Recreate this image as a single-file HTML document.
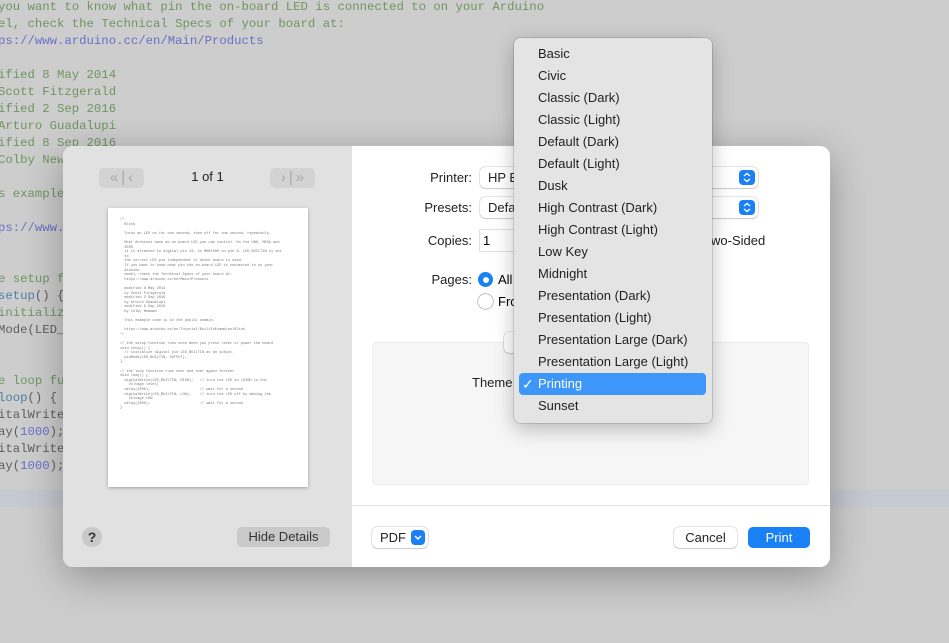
<!DOCTYPE html>
<html><head><meta charset="utf-8"><style>
*{margin:0;padding:0;box-sizing:border-box}
body{width:949px;height:643px;overflow:hidden;background:#cdcdcd;position:relative;font-family:"Liberation Sans",sans-serif}
.code{position:absolute;left:-2px;top:-1px;font:12.3px/17px "Liberation Mono",monospace;color:#5e5e5e;white-space:pre}
.g{color:#6f9660}.b{color:#6a6fc8}.t{color:#4d82a8}
.hl{position:absolute;left:0;top:490px;width:949px;height:17px;background:#c5c9d0}
.dlg{position:absolute;left:63px;top:146px;width:767px;height:421px;border-radius:10px;overflow:hidden;background:#fff;box-shadow:0 10px 40px rgba(0,0,0,.3)}
.lp{position:absolute;left:0;top:0;width:289px;height:421px;background:#e1e1e1}
.a{position:absolute}
.nav{position:absolute;top:22px;height:20px;width:45px;background:#d3d3d3;border-radius:5px;color:#a8a8a8;font-size:15px;text-align:center;line-height:19px}
.page{position:absolute;left:45px;top:62px;width:200px;height:279px;background:#fff;box-shadow:0 1px 3px rgba(0,0,0,.3);font:3.6px/4.6px "Liberation Mono",monospace;color:#777;white-space:pre;padding:10px 0 0 12px;overflow:hidden}
.lbl{position:absolute;font-size:13px;color:#222;text-align:right;width:100px}
.pop{position:absolute;height:21px;background:#fff;border-radius:5px;box-shadow:0 0 0 .5px rgba(0,0,0,.2),0 1px 1px rgba(0,0,0,.12);font-size:13px;line-height:21px;padding-left:8px;color:#222}
.arr{position:absolute;right:3px;top:3px;width:16px;height:15px;border-radius:4px;background:#1a80f6}
.arr svg{position:absolute;left:0;top:0}
.btn{position:absolute;height:21px;background:#fff;border-radius:5px;box-shadow:0 0 0 .5px rgba(0,0,0,.2),0 1px 1px rgba(0,0,0,.12);font-size:13px;line-height:21px;text-align:center;color:#222}
.menu{position:absolute;left:514px;top:38px;width:198px;height:385px;background:#e4e4e4;border-radius:6px;box-shadow:0 0 0 .5px rgba(0,0,0,.25),0 6px 20px rgba(0,0,0,.25);font-size:13px;color:#222}
.mi{position:absolute;left:24px;height:22px;line-height:22px}
</style></head><body>
<div class="hl"></div>
<div class="code"><span class="g">you want to know what pin the on-board LED is connected to on your Arduino
el, check the Technical Specs of your board at:</span>
<span class="b">ps://www.arduino.cc/en/Main/Products</span>

<span class="g">ified 8 May 2014
Scott Fitzgerald
ified 2 Sep 2016
Arturo Guadalupi
ified 8 Sep 2016
Colby Newman

s example code is in the public domain.</span>

<span class="b">ps://www.arduino.cc</span>


<span class="g">e setup function</span>
<span class="t">setup</span>() {
<span class="g">initialize</span>
Mode(LED_BUILTIN


<span class="g">e loop function</span>
<span class="t">loop</span>() {
italWrite(
ay(<span class="b">1000</span>);
italWrite(
ay(<span class="b">1000</span>);</div>

<div class="dlg">
 <div class="lp">
  <div class="nav" style="left:36px">«&thinsp;|&thinsp;‹</div>
  <div class="a" style="left:0;width:289px;top:23px;text-align:center;font-size:13px;color:#222">1 of 1</div>
  <div class="nav" style="left:207px">›&thinsp;|&thinsp;»</div>
  <div class="page">/*
  Blink

  Turns an LED on for one second, then off for one second, repeatedly.

  Most Arduinos have an on-board LED you can control. On the UNO, MEGA and
  ZERO
  it is attached to digital pin 13, on MKR1000 on pin 6. LED_BUILTIN is set
  to
  the correct LED pin independent of which board is used.
  If you want to know what pin the on-board LED is connected to on your
  Arduino
  model, check the Technical Specs of your board at:
  https://www.arduino.cc/en/Main/Products

  modified 8 May 2014
  by Scott Fitzgerald
  modified 2 Sep 2016
  by Arturo Guadalupi
  modified 8 Sep 2016
  by Colby Newman

  This example code is in the public domain.

  https://www.arduino.cc/en/Tutorial/BuiltInExamples/Blink
*/

// the setup function runs once when you press reset or power the board
void setup() {
  // initialize digital pin LED_BUILTIN as an output.
  pinMode(LED_BUILTIN, OUTPUT);
}

// the loop function runs over and over again forever
void loop() {
  digitalWrite(LED_BUILTIN, HIGH);   // turn the LED on (HIGH is the
    voltage level)
  delay(1000);                       // wait for a second
  digitalWrite(LED_BUILTIN, LOW);    // turn the LED off by making the
    voltage LOW
  delay(1000);                       // wait for a second
}</div>
  <div class="a" style="left:19px;top:381px;width:20px;height:20px;border-radius:50%;background:#c9c9c9;text-align:center;line-height:20px;font-size:14px;font-weight:bold;color:#333">?</div>
  <div class="a" style="left:174px;top:381px;width:93px;height:20px;border-radius:5px;background:#c9c9c9;text-align:center;line-height:20px;font-size:13px;color:#333">Hide Details</div>
 </div>
 <div class="a" style="left:289px;top:359px;width:478px;height:1px;background:#e3e3e3"></div>
 <div class="lbl" style="left:309px;top:24px">Printer:</div>
 <div class="pop" style="left:417px;top:21px;width:278px">HP E<div class="arr"><svg width="16" height="15"><path d="M5 6 L8 3.5 L11 6 M5 9 L8 11.5 L11 9" stroke="#fff" stroke-width="1.4" fill="none"/></svg></div></div>
 <div class="lbl" style="left:309px;top:54px">Presets:</div>
 <div class="pop" style="left:417px;top:51px;width:278px">Defa<div class="arr"><svg width="16" height="15"><path d="M5 6 L8 3.5 L11 6 M5 9 L8 11.5 L11 9" stroke="#fff" stroke-width="1.4" fill="none"/></svg></div></div>
 <div class="lbl" style="left:309px;top:87px">Copies:</div>
 <div class="a" style="left:417px;top:84px;width:60px;height:21px;background:#fff;box-shadow:0 0 0 .5px rgba(0,0,0,.25);font-size:13px;line-height:21px;padding-left:3px">1</div>
 <div class="a" style="left:648px;top:87px;font-size:13px;color:#222">wo-Sided</div>
 <div class="lbl" style="left:309px;top:126px">Pages:</div>
 <div class="a" style="left:415px;top:126px;width:15px;height:15px;border-radius:50%;background:#1a80f6"><div style="position:absolute;left:4.5px;top:4.5px;width:6px;height:6px;border-radius:50%;background:#fff"></div></div>
 <div class="a" style="left:435px;top:126px;font-size:13px">All</div>
 <div class="a" style="left:415px;top:148px;width:15px;height:15px;border-radius:50%;background:#fff;box-shadow:0 0 0 .7px #aaa"></div>
 <div class="a" style="left:435px;top:148px;font-size:13px">Fro</div>
 <div class="a" style="left:309px;top:196px;width:437px;height:143px;background:#f6f6f6;border:1px solid #ececec;border-radius:4px"></div>
 <div class="btn" style="left:441px;top:186px;width:20px"></div>
 <div class="a" style="left:409px;top:229px;font-size:13px;color:#222">Theme</div>
 <div class="btn" style="left:309px;top:381px;width:56px;text-align:left;padding-left:8px">PDF<div class="arr" style="right:3px;top:3px;width:14px"><svg width="14" height="15"><path d="M4 6 L7 9 L10 6" stroke="#fff" stroke-width="1.5" fill="none"/></svg></div></div>
 <div class="btn" style="left:611px;top:381px;width:63px">Cancel</div>
 <div class="btn" style="left:685px;top:381px;width:62px;background:#1a80f6;color:#fff;box-shadow:none">Print</div>
</div>

<div class="menu">
 <div class="mi" style="top:5px">Basic</div>
 <div class="mi" style="top:27px">Civic</div>
 <div class="mi" style="top:49px">Classic (Dark)</div>
 <div class="mi" style="top:71px">Classic (Light)</div>
 <div class="mi" style="top:93px">Default (Dark)</div>
 <div class="mi" style="top:115px">Default (Light)</div>
 <div class="mi" style="top:137px">Dusk</div>
 <div class="mi" style="top:159px">High Contrast (Dark)</div>
 <div class="mi" style="top:181px">High Contrast (Light)</div>
 <div class="mi" style="top:203px">Low Key</div>
 <div class="mi" style="top:225px">Midnight</div>
 <div class="mi" style="top:247px">Presentation (Dark)</div>
 <div class="mi" style="top:269px">Presentation (Light)</div>
 <div class="mi" style="top:291px">Presentation Large (Dark)</div>
 <div class="mi" style="top:313px">Presentation Large (Light)</div>
 <div class="a" style="left:5px;top:335px;width:187px;height:22px;background:#3e96f8;border-radius:4px;color:#fff;line-height:22px"><span style="position:absolute;left:3px;font-size:14px">✓</span><span style="position:absolute;left:19px">Printing</span></div>
 <div class="mi" style="top:357px">Sunset</div>
</div>
</body></html>
